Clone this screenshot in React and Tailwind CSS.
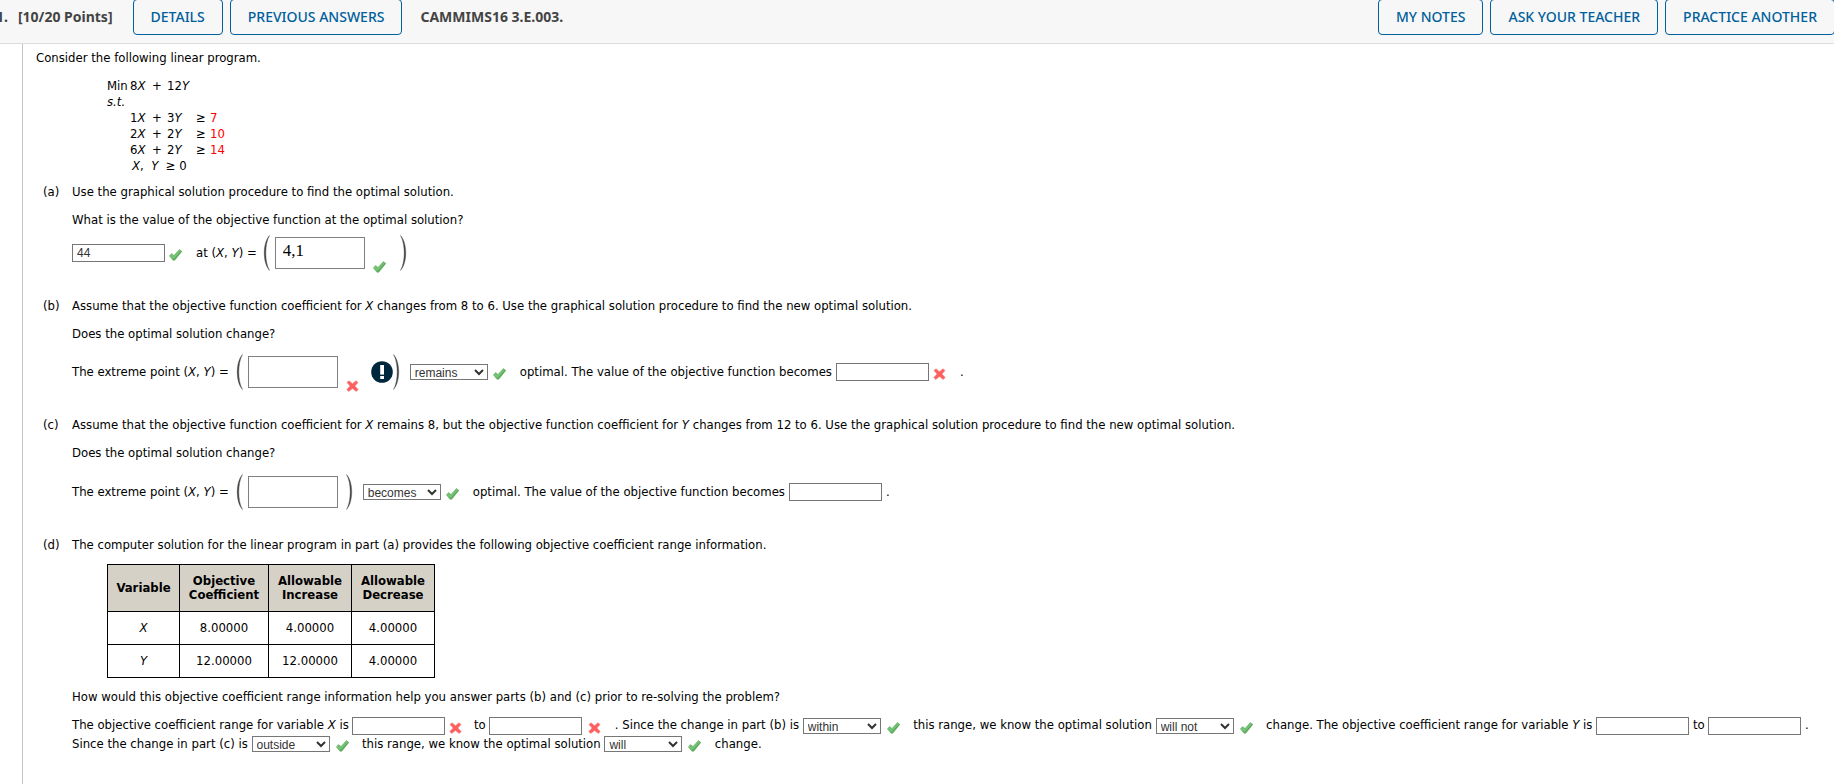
const HEADER_BTN =
  'h-9 shrink-0 rounded border border-[#00609c] px-[17px] leading-[34px] font-medium text-[#00609c] hover:bg-sky-50'

const CONSTRAINTS = [
  { a: '1', b: '3', rhs: '7' },
  { a: '2', b: '2', rhs: '10' },
  { a: '6', b: '2', rhs: '14' },
]

const RANGES = [
  { name: 'X', values: ['8.00000', '4.00000', '4.00000'] },
  { name: 'Y', values: ['12.00000', '12.00000', '4.00000'] },
]

function CheckMark({ className = '' }) {
  return (
    <svg viewBox="0 0 13 12" className={`inline-block h-3 w-[13px] shrink-0 ${className}`} aria-label="correct">
      <path d="M0.4 6.8 L2.7 4.6 L5 6.6 L10.4 0.6 L12.8 2.4 L5.8 11.2 L3.9 11.2 Z" fill="#74c374" stroke="#5cab5c" strokeWidth="0.6" strokeLinejoin="round" />
      <path d="M4 10 L5.2 10.4 L12.2 2.4" fill="none" stroke="#4f9a50" strokeWidth="0.9" />
    </svg>
  )
}

function CrossMark({ className = '' }) {
  return (
    <svg viewBox="0 0 13 12" className={`inline-block h-3 w-[13px] shrink-0 ${className}`} aria-label="incorrect">
      <path
        d="M3 0.8 L6.5 3.7 L10 0.8 L12 2.5 L8.9 6 L12.2 9.6 L10.2 11.4 L6.5 8.4 L2.8 11.4 L0.8 9.6 L4.1 6 L1 2.5 Z"
        fill="#ff5f5f"
        stroke="#f07a7a"
        strokeWidth="0.6"
        strokeLinejoin="round"
      />
    </svg>
  )
}

function Paren({ right, className = '' }) {
  return (
    <svg viewBox="0 0 8 36" className={`h-9 w-2 shrink-0 ${className}`} aria-hidden="true">
      <path
        d={right ? 'M0.5 0.5 C7.6 8 7.6 28 0.5 35.5 C5.4 27 5.4 9 0.5 0.5 Z' : 'M7.5 0.5 C0.4 8 0.4 28 7.5 35.5 C2.6 27 2.6 9 7.5 0.5 Z'}
        fill="#444"
        stroke="#555"
        strokeWidth="0.4"
      />
    </svg>
  )
}

function Blank({ label, value = '', className = '' }) {
  return (
    <input
      type="text"
      aria-label={label}
      defaultValue={value}
      className={`h-[18px] w-[93px] shrink-0 border border-[#767676] bg-white px-1 align-middle font-['Liberation_Sans',sans-serif] text-[12px] text-[#333] ${className}`}
    />
  )
}

function MathBlank({ label, value = '' }) {
  return (
    <input
      type="text"
      aria-label={label}
      defaultValue={value}
      className="ml-[5px] h-8 w-[90px] shrink-0 border border-[#808080] bg-white px-[7px] pb-1 font-['Liberation_Serif',serif] text-[17px]"
    />
  )
}

function Choice({ label, value, options, className = '' }) {
  return (
    <select
      aria-label={label}
      defaultValue={value}
      className={`h-4 w-[78px] shrink-0 border border-[#767676] bg-white align-middle font-['Liberation_Sans',sans-serif] text-[12px] leading-[14px] text-[#333] ${className}`}
    >
      {options.map((o) => (
        <option key={o}>{o}</option>
      ))}
    </select>
  )
}

function Part({ id, children }) {
  return (
    <section className="flex">
      <div className="w-[29px] shrink-0">({id})</div>
      <div className="min-w-0 flex-1">{children}</div>
    </section>
  )
}

export default function App() {
  return (
    <div className="flex min-h-screen flex-col overflow-x-hidden bg-white font-['DejaVu_Sans_Condensed','DejaVu_Sans',sans-serif] text-[13px] leading-4 text-black">
      <header className="flex h-11 items-start border-b border-[#dcdcdc] bg-[#f7f7f7] font-['Noto_Sans','Open_Sans',sans-serif] text-[14px] text-[#444]">
        <div className="-mt-px -mr-px flex flex-1 items-center">
          <span className="-ml-1 font-bold">1.</span>
          <span className="ml-[10px] font-bold">[10/20 Points]</span>
          <button type="button" className={`${HEADER_BTN} ml-5`}>DETAILS</button>
          <button type="button" className={`${HEADER_BTN} ml-[7px]`}>PREVIOUS ANSWERS</button>
          <span className="ml-[18px] font-bold">CAMMIMS16 3.E.003.</span>
          <div className="ml-auto flex gap-[7px]">
            <button type="button" className={HEADER_BTN}>MY NOTES</button>
            <button type="button" className={HEADER_BTN}>ASK YOUR TEACHER</button>
            <button type="button" className={HEADER_BTN}>PRACTICE ANOTHER</button>
          </div>
        </div>
      </header>

      <main className="ml-[22px] flex-1 border-l border-[#c4c4c4] pt-[6px] pl-[13px]">
        <p>Consider the following linear program.</p>

        <table className="mt-3 ml-[71px]">
          <tbody>
            <tr>
              <td className="w-[23px]">Min</td>
              <td className="w-[22px]">8<i>X</i></td>
              <td className="w-[15px]">+</td>
              <td colSpan={3}>12<i>Y</i></td>
            </tr>
            <tr>
              <td colSpan={6}><i>s.t.</i></td>
            </tr>
            {CONSTRAINTS.map((c) => (
              <tr key={c.rhs}>
                <td />
                <td>{c.a}<i>X</i></td>
                <td>+</td>
                <td className="w-[29px]">{c.b}<i>Y</i></td>
                <td className="w-[14px]">≥</td>
                <td className="text-[#f00]">{c.rhs}</td>
              </tr>
            ))}
            <tr>
              <td />
              <td colSpan={5} className="pl-[2px]"><i>X</i>,&nbsp; <i>Y</i>&nbsp; ≥ 0</td>
            </tr>
          </tbody>
        </table>

        <div className="mt-[10px] space-y-[27px] pl-[7px]">
          <Part id="a">
            <p>Use the graphical solution procedure to find the optimal solution.</p>
            <p className="mt-3">What is the value of the objective function at the optimal solution?</p>
            <div className="mt-[7px] flex items-center">
              <Blank label="Objective value" value="44" />
              <CheckMark className="mt-1 ml-1" />
              <span className="ml-[14px]">at (<i>X</i>, <i>Y</i>) =</span>
              <Paren className="ml-[5px]" />
              <MathBlank label="Optimal point" value="4,1" />
              <CheckMark className="-mb-[2px] ml-2 self-end" />
              <Paren right className="ml-[14px]" />
            </div>
          </Part>

          <Part id="b">
            <p>Assume that the objective function coefficient for <i>X</i> changes from 8 to 6. Use the graphical solution procedure to find the new optimal solution.</p>
            <p className="mt-3">Does the optimal solution change?</p>
            <div className="mt-3 flex items-center">
              <span>The extreme point (<i>X</i>, <i>Y</i>) =</span>
              <Paren className="ml-[6px]" />
              <MathBlank label="Extreme point" />
              <CrossMark className="-mb-[2px] ml-2 self-end" />
              <svg viewBox="0 0 22 22" className="ml-3 size-[22px] shrink-0" aria-label="warning">
                <circle cx="11" cy="11" r="10.8" fill="#00263e" />
                <rect x="9.2" y="4" width="3.8" height="9.6" fill="#fff" />
                <rect x="9.2" y="15" width="3.8" height="3" fill="#fff" />
              </svg>
              <Paren right />
              <Choice label="Extreme point status" value="remains" options={['remains', 'becomes']} className="ml-[9px]" />
              <CheckMark className="mt-1 ml-[5px]" />
              <span className="ml-[14px]">optimal. The value of the objective function becomes</span>
              <Blank label="New objective value" className="ml-1" />
              <CrossMark className="mt-1 ml-1" />
              <span className="ml-[14px]">.</span>
            </div>
          </Part>

          <Part id="c">
            <p>Assume that the objective function coefficient for <i>X</i> remains 8, but the objective function coefficient for <i>Y</i> changes from 12 to 6. Use the graphical solution procedure to find the new optimal solution.</p>
            <p className="mt-3">Does the optimal solution change?</p>
            <div className="mt-[13px] flex items-center">
              <span>The extreme point (<i>X</i>, <i>Y</i>) =</span>
              <Paren className="ml-[6px]" />
              <MathBlank label="Extreme point" />
              <Paren right className="ml-2" />
              <Choice label="Extreme point status" value="becomes" options={['remains', 'becomes']} className="ml-[9px]" />
              <CheckMark className="mt-1 ml-[5px]" />
              <span className="ml-[14px]">optimal. The value of the objective function becomes</span>
              <Blank label="New objective value" className="ml-1" />
              <span className="ml-1">.</span>
            </div>
          </Part>

          <Part id="d">
            <p>The computer solution for the linear program in part (a) provides the following objective coefficient range information.</p>
            <table className="mt-[11px] ml-[35px] border-collapse text-center [&_td]:border [&_td]:border-black [&_th]:border [&_th]:border-black">
              <thead>
                <tr className="h-[47px] bg-[#d6d1c7] leading-[14px]">
                  <th className="w-[72px]">Variable</th>
                  <th className="w-[89px]">Objective<br />Coefficient</th>
                  <th className="w-[83px]">Allowable<br />Increase</th>
                  <th className="w-[83px]">Allowable<br />Decrease</th>
                </tr>
              </thead>
              <tbody>
                {RANGES.map((r) => (
                  <tr key={r.name} className="h-[33px]">
                    <td><i>{r.name}</i></td>
                    {r.values.map((v, i) => (
                      <td key={i}>{v}</td>
                    ))}
                  </tr>
                ))}
              </tbody>
            </table>
            <p className="mt-[11px]">How would this objective coefficient range information help you answer parts (b) and (c) prior to re-solving the problem?</p>
            <p className="mt-[11px] leading-[18px]">
              The objective coefficient range for variable <i>X</i> is <Blank label="Lower limit for X" />
              <CrossMark className="mx-1 mt-1 align-middle" />
              &nbsp; to <Blank label="Upper limit for X" />
              <CrossMark className="mx-[6px] mt-1 align-middle" />
              &nbsp; . Since the change in part (b) is{' '}
              <Choice label="Part (b) change" value="within" options={['within', 'outside']} />
              <CheckMark className="mx-[6px] mt-1 align-middle" />
              &nbsp; this range, we know the optimal solution{' '}
              <Choice label="Part (b) result" value="will not" options={['will', 'will not']} />
              <CheckMark className="mx-[6px] mt-1 align-middle" />
              &nbsp; change. The objective coefficient range for variable <i>Y</i> is <Blank label="Lower limit for Y" /> to{' '}
              <Blank label="Upper limit for Y" />
              {' . '}
              <span>Since the change in part (c) is </span>
              <Choice label="Part (c) change" value="outside" options={['within', 'outside']} />
              <CheckMark className="mx-[6px] mt-1 align-middle" />
              &nbsp; this range, we know the optimal solution{' '}
              <Choice label="Part (c) result" value="will" options={['will', 'will not']} />
              <CheckMark className="mx-[6px] mt-1 align-middle" />
              &nbsp; change.
            </p>
          </Part>
        </div>
      </main>
    </div>
  )
}
